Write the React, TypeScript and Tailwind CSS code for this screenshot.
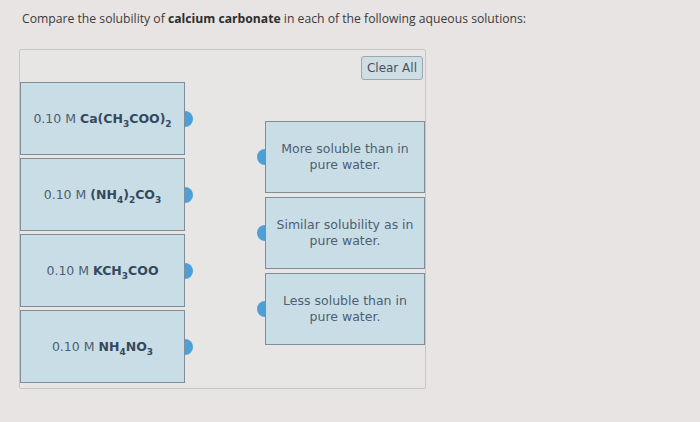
import React from 'react';

type Item = { id: string; label: React.ReactNode };

const Sub: React.FC<{ children: React.ReactNode }> = ({ children }) => (
  <sub className="text-[9px] relative top-[1px] align-sub">{children}</sub>
);

const solutions: Item[] = [
  {
    id: 'caac',
    label: (
      <>
        0.10 M <b className="font-bold text-[#34495c]">Ca(CH<Sub>3</Sub>COO)<Sub>2</Sub></b>
      </>
    ),
  },
  {
    id: 'nh4co3',
    label: (
      <>
        0.10 M <b className="font-bold text-[#34495c]">(NH<Sub>4</Sub>)<Sub>2</Sub>CO<Sub>3</Sub></b>
      </>
    ),
  },
  {
    id: 'kac',
    label: (
      <>
        0.10 M <b className="font-bold text-[#34495c]">KCH<Sub>3</Sub>COO</b>
      </>
    ),
  },
  {
    id: 'nh4no3',
    label: (
      <>
        0.10 M <b className="font-bold text-[#34495c]">NH<Sub>4</Sub>NO<Sub>3</Sub></b>
      </>
    ),
  },
];

const targets: Item[] = [
  { id: 'more', label: <>More soluble than in<br />pure water.</> },
  { id: 'similar', label: <>Similar solubility as in<br />pure water.</> },
  { id: 'less', label: <>Less soluble than in<br />pure water.</> },
];

const Tile: React.FC<{ item: Item; side: 'left' | 'right'; className: string }> = ({ item, side, className }) => (
  <div
    className={`relative flex items-center justify-center text-center bg-[#c9dde7] border border-[#7f8f99] text-[12.5px] leading-[16px] text-[#4d5f70] ${className}`}
    style={{ fontFamily: '"DejaVu Sans", Verdana, sans-serif' }}
  >
    <span>{item.label}</span>
    {side === 'right' ? (
      <span className="absolute -right-[9px] top-1/2 -translate-y-1/2 w-[8px] h-[16px] rounded-r-full bg-[#4d9fd5]" />
    ) : (
      <span className="absolute -left-[9px] top-1/2 -translate-y-1/2 w-[8px] h-[16px] rounded-l-full bg-[#4d9fd5]" />
    )}
  </div>
);

export default function App() {
  return (
    <div className="w-[700px] h-[422px] bg-[#e8e4e3] pt-[10px] overflow-hidden">
      <p
        className="ml-[22px] text-[12.2px] leading-[18px] text-[#3b3b3b]"
        style={{ fontFamily: '"Open Sans", "Noto Sans", sans-serif' }}
      >
        Compare the solubility of <b className="font-bold text-[#2e2e2e]">calcium carbonate</b> in each of the following aqueous solutions:
      </p>

      <div className="ml-[19px] mt-[21px] w-[407px] h-[340px] bg-[#e8e6e4] border border-[#c6c6c6] rounded-[2px] flex justify-between">
        <div className="flex flex-col gap-[3px] pt-[32px]">
          {solutions.map((s) => (
            <Tile key={s.id} item={s} side="right" className="w-[165px] h-[73px]" />
          ))}
        </div>

        <div className="flex flex-col items-end pt-[6px]">
          <button
            className="mr-[2px] h-[24px] px-[5px] rounded-[3px] bg-[#cfdde4] border border-[#9aa7ae] text-[12px] text-[#44525e]"
            style={{ fontFamily: '"DejaVu Sans", Verdana, sans-serif' }}
          >
            Clear All
          </button>
          <div className="flex flex-col gap-[4px] mt-[41px]">
            {targets.map((t) => (
              <Tile key={t.id} item={t} side="left" className="w-[160px] h-[72px]" />
            ))}
          </div>
        </div>
      </div>
    </div>
  );
}
